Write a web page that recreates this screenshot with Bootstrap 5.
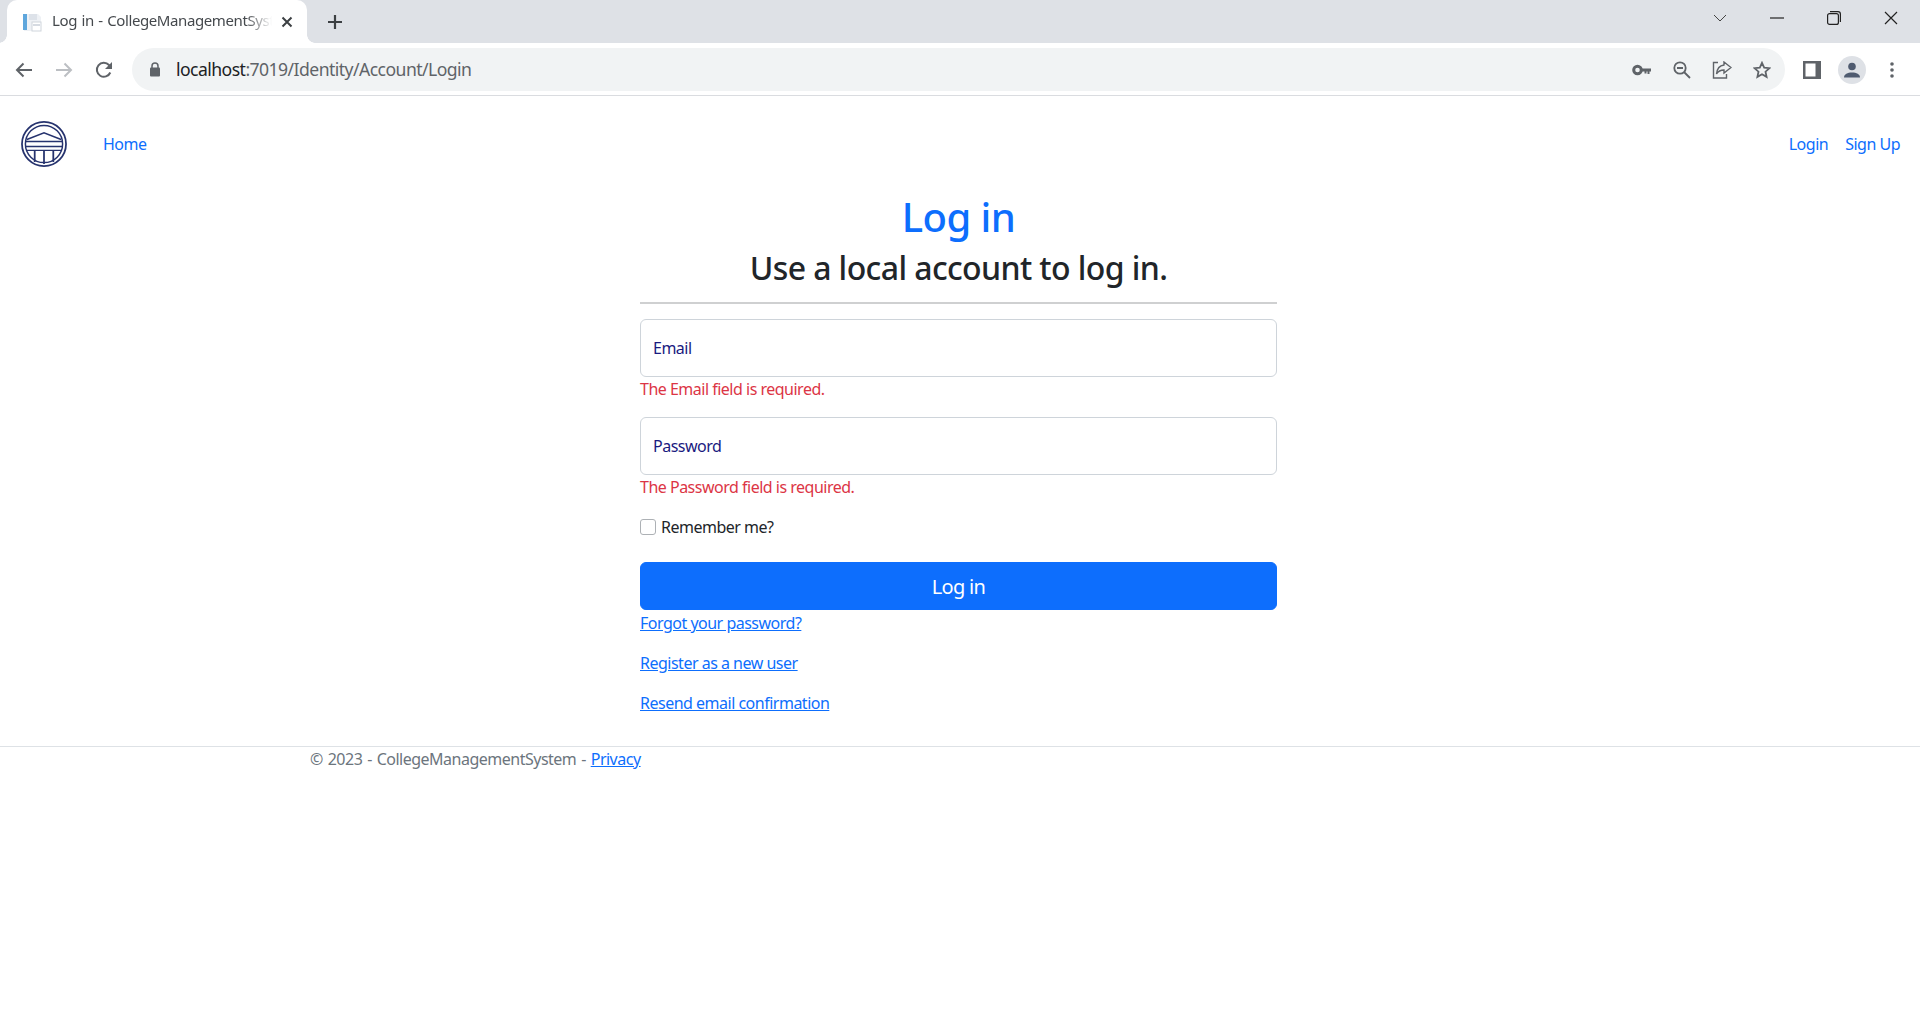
<!DOCTYPE html>
<html lang="en">
<head>
<meta charset="utf-8">
<title>Log in - CollegeManagementSystem</title>
<link href="https://cdn.jsdelivr.net/npm/bootstrap@5.3.0/dist/css/bootstrap.min.css" rel="stylesheet">
<style>
html,body{height:1016px;overflow:hidden;background:#fff}
body{font-family:"Noto Sans",sans-serif;font-size:16px;letter-spacing:-.5px;color:#212529}
.tabstrip{height:43px;background:#dee1e6;padding-left:7px}
.tabitem{width:300px;height:43px;background:#fff;border-radius:10px 10px 0 0;padding:0 13px 0 15px;position:relative}
.tabitem::before,.tabitem::after{content:"";position:absolute;bottom:0;width:8px;height:8px}
.tabitem::before{left:-8px;background:radial-gradient(circle at 0 0,#dee1e6 7.500px,#fff 8px)}
.tabitem::after{right:-8px;background:radial-gradient(circle at 100% 0,#dee1e6 7.500px,#fff 8px)}
.tabtitle{font-size:15px;color:#45494d;white-space:nowrap;overflow:hidden;width:220px;margin:0 0 2px 10px;letter-spacing:-.4px;word-spacing:1px;-webkit-mask-image:linear-gradient(90deg,#000 88%,transparent)}
.tabplus{margin-left:19px}
.winctl{margin-left:auto;padding-right:1px}
.winbtn{width:57px;height:36px}
.chrome-bar{height:53px;background:#fff;border-bottom:1px solid #dadce0;padding:5px 0 4px 4px}
.tool{width:40px;height:43px;flex:none}
.omni{width:1653px;height:43px;background:#f1f3f4;border-radius:22px;margin-left:8px;padding-left:17px;flex:none}
.omni-url{font-size:17.6px;color:#5f6368;margin-left:15px;letter-spacing:-.55px}
.omni-url b{font-weight:400;color:#202124}
.omni-icons{margin-left:auto;padding-right:3px}
.panel-tool{margin-left:7px}
.avatar-circle{width:28px;height:28px;border-radius:50%;background:#dee1e6}
.sitenav{height:96px;padding:0 20px 0 21px}
.sitenav a{text-decoration:none;color:#0d6efd}
.home-link{margin-left:36px}
.login-link{margin-right:17px}
.formwrap{width:637px;margin:0 auto;position:relative;left:-1.500px}
.loginhead{font-size:40px;font-weight:500;color:#0d6efd;line-height:48px;margin:1px 0 8px;text-align:center;letter-spacing:-.6px}
.subhead{font-size:32px;font-weight:500;line-height:38px;margin:0;text-align:center;letter-spacing:-.6px}
.formrule{margin:15px 0 15px;border-top:2px solid #cfd0d1;opacity:1}
.formwrap .form-floating label{color:#1a1a80}
.formwrap .form-control{height:58px;border-color:#ced4da}
.fielderr{color:#dc3545;line-height:24px;height:24px}
.fieldgroup{margin-bottom:16px}
.rememberrow{height:24px;margin-bottom:23px}
.rememberrow input{width:16px;height:16px;margin:0 5px 0 0;border-radius:3px;appearance:none;border:1px solid #adb1b5;background:#fff}
.submitbtn{height:48px;font-size:20px;border-radius:6px;padding:2px 0 0;letter-spacing:-.7px}
.linkline{line-height:24px;margin:0 0 16px}
.linkline:first-of-type{margin-top:1px}
.linkline a,.pagefoot a{color:#0d6efd}
.pagefoot{border-top:1px solid #dee2e6;margin-top:31px;color:#6c757d;line-height:24px;padding-left:310px;word-spacing:1.200px}
</style>
</head>
<body>
<div class="tabstrip d-flex align-items-end">
  <div class="tabitem d-flex align-items-center">
    <svg width="20" height="20" viewBox="0 0 20 20"><path d="M2 2h14l3 3v14H2z" fill="#eef1f5"/><rect x="1" y="2" width="4" height="16" fill="#5ea6dc"/><rect x="7" y="2" width="8" height="6" fill="#dde2e9"/><rect x="10" y="10" width="9" height="9" fill="#fff" stroke="#cfd5dc"/><rect x="11" y="12" width="7" height="2" fill="#d6dbe2"/></svg>
    <div class="tabtitle">Log in - CollegeManagementSystem</div>
    <svg class="ms-auto" width="14" height="14" viewBox="0 0 14 14"><path d="M2.500 2.500l9 9M11.500 2.500l-9 9" stroke="#3c4043" stroke-width="2" fill="none"/></svg>
  </div>
  <svg class="tabplus align-self-center" width="18" height="18" viewBox="0 0 18 18"><path d="M9 2v14M2 9h14" stroke="#3c4043" stroke-width="2.200" fill="none"/></svg>
  <div class="winctl d-flex align-self-start">
    <div class="winbtn d-flex align-items-center justify-content-center"><svg width="14" height="8" viewBox="0 0 14 8"><path d="M1 1l6 6 6-6" stroke="#444" stroke-width="1" fill="none"/></svg></div>
    <div class="winbtn d-flex align-items-center justify-content-center"><svg width="14" height="2" viewBox="0 0 14 2"><path d="M0 1h14" stroke="#222" stroke-width="1.200"/></svg></div>
    <div class="winbtn d-flex align-items-center justify-content-center"><svg width="14" height="14" viewBox="0 0 14 14"><rect x=".6" y="2.600" width="10.800" height="10.800" rx="2" fill="none" stroke="#222" stroke-width="1.200"/><path d="M3 .6h8a2.400 2.400 0 0 1 2.400 2.400v8" fill="none" stroke="#222" stroke-width="1.200"/></svg></div>
    <div class="winbtn d-flex align-items-center justify-content-center"><svg width="14" height="14" viewBox="0 0 14 14"><path d="M1 1l12 12M13 1L1 13" stroke="#222" stroke-width="1.200" fill="none"/></svg></div>
  </div>
</div>
<div class="chrome-bar d-flex">
  <div class="tool d-flex align-items-center justify-content-center"><svg width="18" height="16" viewBox="0 0 18 16"><path d="M17 8H2M8.500 1.500L2 8l6.500 6.500" stroke="#5f6368" stroke-width="2" fill="none"/></svg></div>
  <div class="tool d-flex align-items-center justify-content-center"><svg width="18" height="16" viewBox="0 0 18 16"><path d="M1 8h15M9.500 1.500L16 8l-6.500 6.500" stroke="#bcbfc3" stroke-width="2" fill="none"/></svg></div>
  <div class="tool d-flex align-items-center justify-content-center"><svg width="18" height="18" viewBox="0 0 18 18"><path d="M15.300 11.500A7 7 0 1 1 14 4L16.500 6.500" stroke="#5f6368" stroke-width="2" fill="none"/><path d="M17 1v7h-7z" fill="#5f6368"/></svg></div>
  <div class="omni d-flex align-items-center">
    <svg width="12" height="15" viewBox="0 0 12 15"><path d="M3 6V4a3 3 0 0 1 6 0v2" fill="none" stroke="#5f6368" stroke-width="1.500"/><rect x="1" y="5.500" width="10" height="9" rx="1" fill="#5f6368"/></svg>
    <div class="omni-url"><b>localhost</b>:7019/Identity/Account/Login</div>
    <div class="omni-icons d-flex">
      <div class="tool d-flex align-items-center justify-content-center"><svg width="20" height="12" viewBox="0 0 20 12"><circle cx="5.500" cy="6" r="3.800" fill="none" stroke="#5f6368" stroke-width="3"/><path d="M9 4.500h10v3h-1.500v2.500h-2V7.500h-1v2h-2V7.500H9z" fill="#5f6368"/></svg></div>
      <div class="tool d-flex align-items-center justify-content-center"><svg width="18" height="18" viewBox="0 0 18 18"><circle cx="7" cy="7" r="5.700" fill="none" stroke="#5f6368" stroke-width="1.800"/><path d="M4 7h6M11 11l6 6" stroke="#5f6368" stroke-width="1.800" fill="none"/></svg></div>
      <div class="tool d-flex align-items-center justify-content-center"><svg width="20" height="18" viewBox="0 0 20 18"><path d="M6 1.500H1.500v15.500h13v-4" fill="none" stroke="#5f6368" stroke-width="1.400"/><path d="M12 1l7 5.500-7 5.500V9C8 9 6 10.500 4.500 13 5 8 8 4.500 12 4z" fill="#f1f3f4" stroke="#5f6368" stroke-width="1.400"/></svg></div>
      <div class="tool d-flex align-items-center justify-content-center"><svg width="18" height="18" viewBox="0 0 18 18"><path d="M9 1.800l2.200 4.800 5.200.600-3.900 3.500 1.100 5.200L9 13.300l-4.600 2.600 1.100-5.200L1.600 7.200l5.200-.600z" fill="none" stroke="#5f6368" stroke-width="1.800"/></svg></div>
    </div>
  </div>
  <div class="tool panel-tool d-flex align-items-center justify-content-center"><svg width="18" height="18" viewBox="0 0 18 18"><rect width="18" height="18" fill="#5f6368"/><rect x="2.500" y="2.500" width="10" height="13" fill="#fff"/></svg></div>
  <div class="tool d-flex align-items-center justify-content-center"><div class="avatar-circle d-flex align-items-center justify-content-center"><svg width="16" height="16" viewBox="0 0 16 16"><circle cx="8" cy="4.500" r="3.800" fill="#4f5b70"/><path d="M0 15.500c0-3.500 3.500-5 8-5s8 1.500 8 5z" fill="#4f5b70"/></svg></div></div>
  <div class="tool d-flex align-items-center justify-content-center"><svg width="4" height="16" viewBox="0 0 4 16"><circle cx="2" cy="2" r="1.800" fill="#5f6368"/><circle cx="2" cy="8" r="1.800" fill="#5f6368"/><circle cx="2" cy="14" r="1.800" fill="#5f6368"/></svg></div>
</div>
<nav class="sitenav d-flex align-items-center">
  <svg width="46" height="46" viewBox="0 0 47 47" aria-label="College logo"><circle cx="23.500" cy="23.500" r="22.500" fill="none" stroke="#26336e" stroke-width="1.800"/><circle cx="23.500" cy="23.500" r="19" fill="none" stroke="#26336e" stroke-width="1.500"/><path d="M6 19L23.500 12 41 19" fill="none" stroke="#26336e" stroke-width="1.600"/><path d="M5 21h37M4.500 26h38M6 30h35" stroke="#26336e" stroke-width="1.500" fill="none"/><path d="M14 30v12M23.500 30v14M33 30v12" stroke="#26336e" stroke-width="1.800" fill="none"/></svg>
  <a class="home-link" href="#">Home</a>
  <a class="login-link ms-auto" href="#">Login</a>
  <a href="#">Sign Up</a>
</nav>
<main class="formwrap">
  <h1 class="loginhead">Log in</h1>
  <h2 class="subhead">Use a local account to log in.</h2>
  <hr class="formrule">
  <form>
    <div class="fieldgroup">
      <div class="form-floating"><input class="form-control" id="em" type="email" placeholder=" "><label for="em">Email</label></div>
      <div class="fielderr">The Email field is required.</div>
    </div>
    <div class="fieldgroup">
      <div class="form-floating"><input class="form-control" id="pw" type="password" placeholder=" "><label for="pw">Password</label></div>
      <div class="fielderr">The Password field is required.</div>
    </div>
    <div class="rememberrow d-flex align-items-center"><input type="checkbox" id="rm"><label for="rm">Remember me?</label></div>
    <button type="button" class="btn btn-primary w-100 submitbtn">Log in</button>
  </form>
  <p class="linkline"><a href="#">Forgot your password?</a></p>
  <p class="linkline"><a href="#">Register as a new user</a></p>
  <p class="linkline"><a href="#">Resend email confirmation</a></p>
</main>
<footer class="pagefoot">&copy; 2023 - CollegeManagementSystem - <a href="#">Privacy</a></footer>
</body>
</html>
